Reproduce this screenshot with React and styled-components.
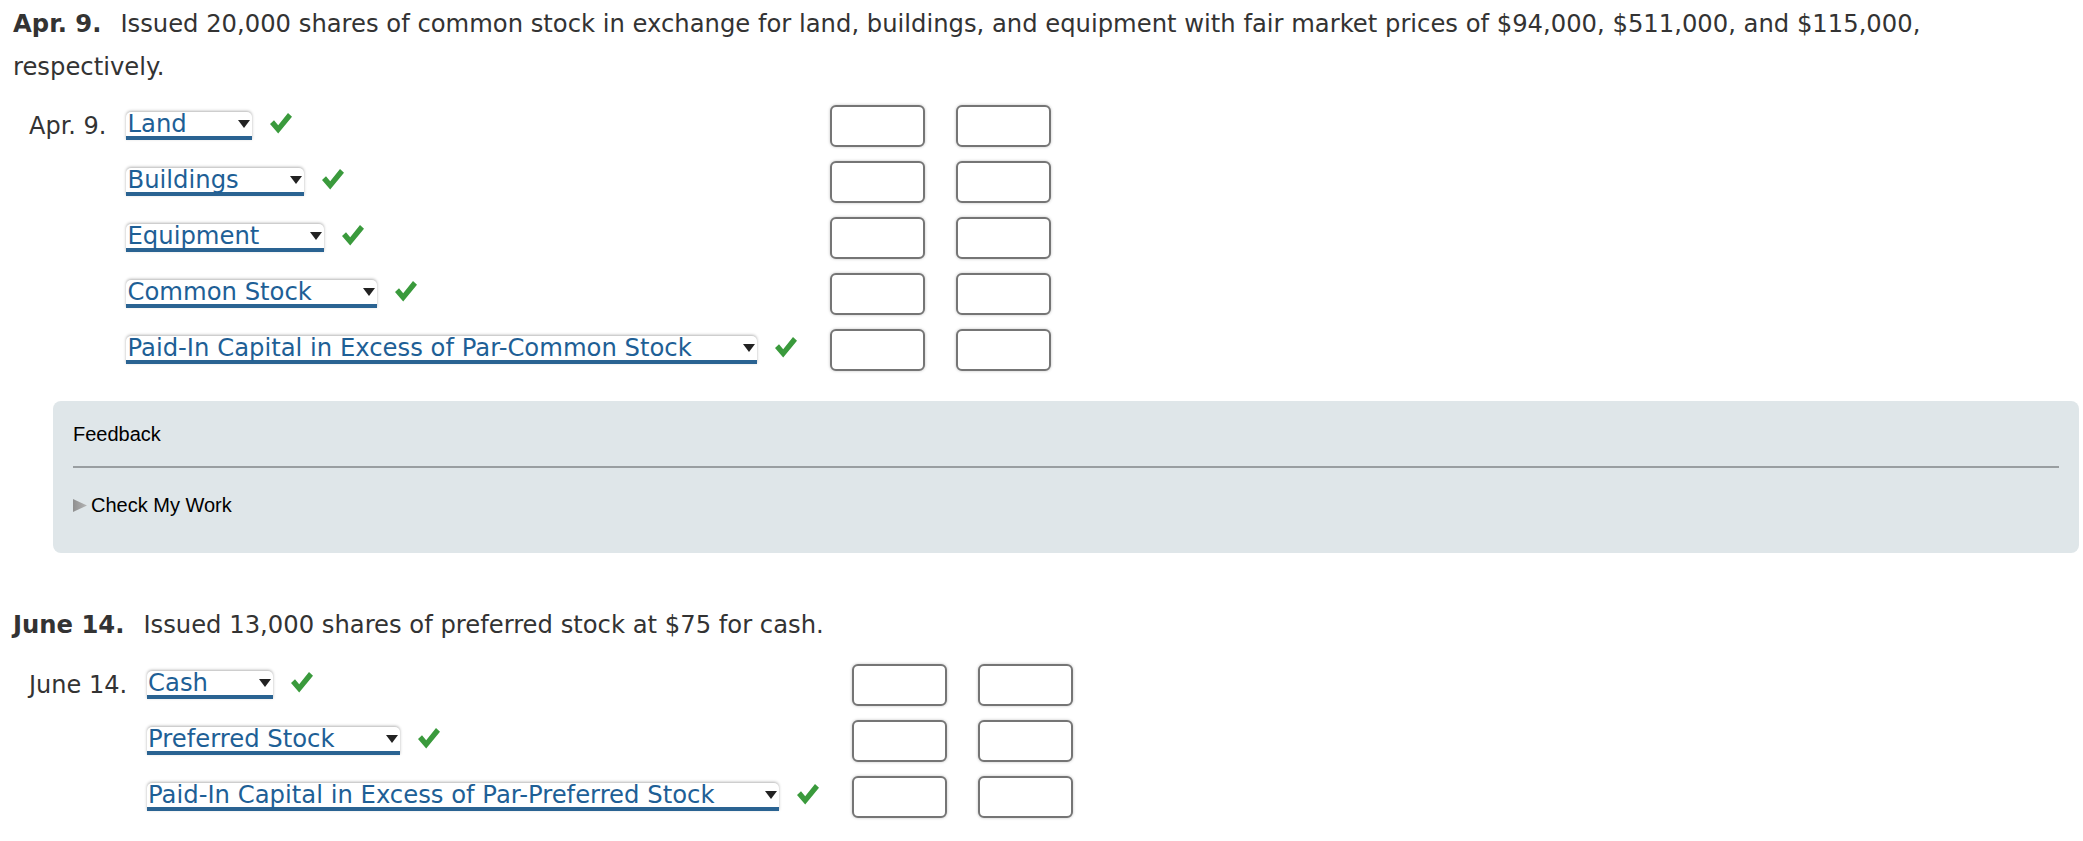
import React from "react";
import styled, { createGlobalStyle } from "styled-components";

const GlobalStyle = createGlobalStyle`
  html, body { margin: 0; padding: 0; background: #ffffff; }
  body {
    font-family: "DejaVu Sans", Verdana, sans-serif;
    color: #333333;
  }
`;

const Page = styled.div`
  padding: 2px 4px 0 13px;
`;

const Prompt = styled.p`
  margin: ${(p) => (p.$first ? "0" : "50px 0 0")};
  padding-right: 60px;
  font-size: 24.25px;
  line-height: 43px;
`;

const DateTag = styled.strong`
  font-weight: bold;
  margin-right: 19px;
`;

const Journal = styled.div`
  display: grid;
  grid-template-columns: auto auto 95px 95px;
  grid-auto-rows: 56px;
  align-items: center;
  justify-content: start;
  margin: ${(p) => (p.$tight ? "11px" : "10px")} 0 0 16px;
`;

const DateLabel = styled.div`
  font-size: 24px;
  padding-right: 20px;
  white-space: nowrap;
`;

const EntryCell = styled.div`
  display: flex;
  align-items: center;
  gap: 18px;
  padding-right: 33px;
`;

const AccountSelect = styled.div`
  display: inline-flex;
  align-items: center;
  height: 24px;
  padding: 0 2px 0 1px;
  background: #ffffff;
  color: #1e5f96;
  font-size: 24.3px;
  line-height: 24px;
  white-space: nowrap;
  border-bottom: 4px solid #2a6392;
  border-radius: 5px 5px 0 0;
  box-shadow: 0 -1px 3px rgba(0, 0, 0, 0.3);
`;

const Arrow = styled.svg`
  margin-left: 51px;
  flex: none;
`;

const Check = styled.svg`
  flex: none;
  margin-top: -6px;
`;

const AmountInput = styled.input`
  box-sizing: border-box;
  width: 95px;
  height: 42px;
  margin-left: ${(p) => (p.$credit ? "31px" : "0")};
  border: 2px solid #757575;
  border-radius: 6px;
  background: #ffffff;
  box-shadow: 0 0 3px rgba(0, 0, 0, 0.25);
  outline: none;
  padding: 0 6px;
  font: 20px "DejaVu Sans", sans-serif;
`;

const FeedbackPanel = styled.section`
  margin: 23px 0 0 40px;
  padding: 22px 20px 36px;
  background: #dfe6e9;
  border-radius: 8px;
  font-family: "Liberation Sans", Arial, sans-serif;
  color: #000000;
`;

const FeedbackTitle = styled.div`
  font-size: 20px;
  line-height: 23px;
`;

const Rule = styled.hr`
  margin: 20px 0 0;
  border: none;
  height: 2px;
  background: #999ea1;
`;

const Toggle = styled.div`
  display: flex;
  align-items: center;
  gap: 4px;
  margin-top: 26px;
  font-size: 20px;
  line-height: 23px;
`;

const SelectArrow = () => (
  <Arrow width="12" height="8" viewBox="0 0 12 8">
    <polygon points="0,0 12,0 6,8" fill="#222" />
  </Arrow>
);

const CheckMark = () => (
  <Check width="22" height="21" viewBox="0 0 22 21">
    <path d="M0 11 L4 7.2 L8.2 12.2 L18 0 L22 3.8 L8.2 20.5 Z" fill="#3a9a3c" />
  </Check>
);

const Entry = ({ date, account }) => (
  <>
    <DateLabel>{date || ""}</DateLabel>
    <EntryCell>
      <AccountSelect>
        <span>{account}</span>
        <SelectArrow />
      </AccountSelect>
      <CheckMark />
    </EntryCell>
    <AmountInput type="text" aria-label={`${account} debit`} />
    <AmountInput type="text" $credit aria-label={`${account} credit`} />
  </>
);

const aprAccounts = [
  "Land",
  "Buildings",
  "Equipment",
  "Common Stock",
  "Paid-In Capital in Excess of Par-Common Stock",
];

const juneAccounts = [
  "Cash",
  "Preferred Stock",
  "Paid-In Capital in Excess of Par-Preferred Stock",
];

export default function App() {
  return (
    <Page>
      <GlobalStyle />
      <Prompt $first>
        <DateTag>Apr. 9.</DateTag>
        Issued 20,000 shares of common stock in exchange for land, buildings, and equipment
        with fair market prices of $94,000, $511,000, and $115,000, respectively.
      </Prompt>
      <Journal>
        {aprAccounts.map((a, i) => (
          <Entry key={a} account={a} date={i === 0 ? "Apr. 9." : ""} />
        ))}
      </Journal>

      <FeedbackPanel>
        <FeedbackTitle>Feedback</FeedbackTitle>
        <Rule />
        <Toggle>
          <svg width="14" height="13" viewBox="0 0 14 13">
            <defs>
              <linearGradient id="tri" x1="0" y1="0" x2="1" y2="0">
                <stop offset="0" stopColor="#8f8f8f" />
                <stop offset="1" stopColor="#b4b4b4" />
              </linearGradient>
            </defs>
            <polygon points="0,0 14,6.5 0,13" fill="url(#tri)" />
          </svg>
          <span>Check My Work</span>
        </Toggle>
      </FeedbackPanel>

      <Prompt>
        <DateTag>June 14.</DateTag>
        Issued 13,000 shares of preferred stock at $75 for cash.
      </Prompt>
      <Journal $tight>
        {juneAccounts.map((a, i) => (
          <Entry key={a} account={a} date={i === 0 ? "June 14." : ""} />
        ))}
      </Journal>
    </Page>
  );
}
